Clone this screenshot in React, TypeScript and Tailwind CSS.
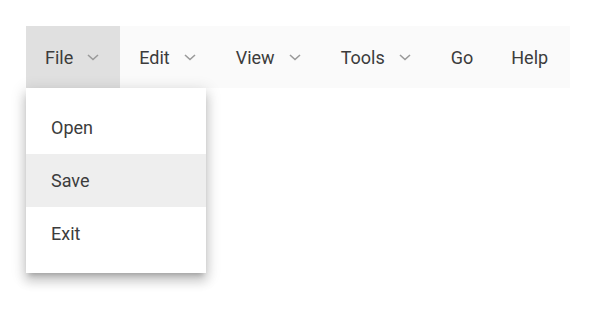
const menus = [
  { label: "File", dropdown: true, active: true },
  { label: "Edit", dropdown: true },
  { label: "View", dropdown: true },
  { label: "Tools", dropdown: true },
  { label: "Go" },
  { label: "Help" },
];

const fileItems = ["Open", "Save", "Exit"];

const Chevron = () => (
  <svg width="16" height="16" viewBox="0 0 16 16" className="ml-[12px] text-[#9a9a9a]">
    <path d="M3 6l5 4.5L13 6" fill="none" stroke="currentColor" strokeWidth="1.6" />
  </svg>
);

export default function App() {
  return (
    <div className="min-h-screen bg-white pl-[26px] pt-[26px] font-['Roboto',sans-serif] text-[18px] text-[#3c3c3c]">
      {/* Menu bar */}
      <nav className="relative flex h-[62px] w-[544px] bg-[#fafafa]">
        {menus.map((m) => (
          <div
            key={m.label}
            className={`relative flex h-full items-center px-[19px] ${m.active ? "bg-[#e0e0e0]" : ""}`}
          >
            <span>{m.label}</span>
            {m.dropdown && <Chevron />}
            {m.active && (
              <ul className="absolute left-0 top-full z-10 w-[180px] bg-white py-[13px] shadow-[0_5px_5px_-3px_rgba(0,0,0,0.2),0_8px_10px_1px_rgba(0,0,0,0.14),0_3px_14px_2px_rgba(0,0,0,0.12)]">
                {fileItems.map((item) => (
                  <li
                    key={item}
                    className={`flex h-[53px] items-center px-[25px] ${item === "Save" ? "bg-[#eeeeee]" : ""}`}
                  >
                    {item}
                  </li>
                ))}
              </ul>
            )}
          </div>
        ))}
      </nav>
    </div>
  );
}
